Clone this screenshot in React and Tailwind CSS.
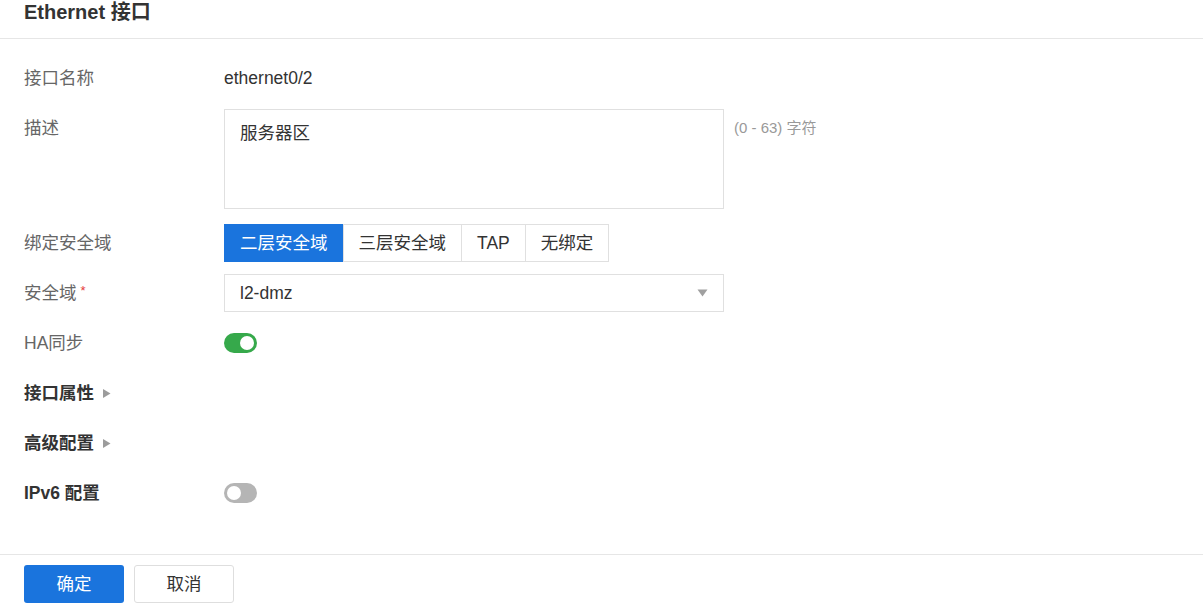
import React from "react";

const font = { fontFamily: '"Liberation Sans", Arial, "Noto Sans CJK SC", sans-serif' };

function Caret() {
  return (
    <svg width="9" height="11" viewBox="0 0 9 11" className="ml-[8px]">
      <path d="M1 1 L8.5 5.5 L1 10 Z" fill="#9c9c9c" />
    </svg>
  );
}

function Toggle({ on }) {
  return (
    <div
      className={
        "flex h-[20px] w-[33px] items-center rounded-full px-[3px] " +
        (on ? "justify-end bg-[#36a94b]" : "justify-start bg-[#b5b5b5]")
      }
    >
      <div className="h-[14px] w-[14px] rounded-full bg-white" />
    </div>
  );
}

function Row({ label, children, top, className = "" }) {
  return (
    <div className={"flex " + (top ? "items-start " : "items-center ") + className}>
      <div className="flex h-[38px] w-[200px] shrink-0 items-center">{label}</div>
      {children}
    </div>
  );
}

export default function App() {
  const seg = ["二层安全域", "三层安全域", "TAP", "无绑定"];
  return (
    <div className="flex h-[611px] w-[1203px] flex-col bg-white text-[17.5px] text-[#333]" style={font}>
      <div className="h-[39px] shrink-0 border-b border-[#e6e6e6] px-[24px]">
        <div className="text-[20px] font-bold leading-[24px] text-[#333]">Ethernet 接口</div>
      </div>

      <div className="flex flex-1 flex-col gap-[12px] px-[24px] pt-[20px]">
        <Row label={<span className="text-[#666]">接口名称</span>}>
          <span className="text-[#333]">ethernet0/2</span>
        </Row>

        <Row top label={<span className="text-[#666]">描述</span>} className="mb-[3px]">
          <div className="h-[100px] w-[500px] border border-[#e0e0e0] px-[15px] pt-[10px] leading-[26px] text-[#333]">
            服务器区
          </div>
          <div className="ml-[10px] flex h-[38px] items-center text-[15px] text-[#999]">(0 - 63) 字符</div>
        </Row>

        <Row label={<span className="text-[#666]">绑定安全域</span>}>
          <div className="flex h-[38px]">
            {seg.map((s, i) => (
              <div
                key={s}
                className={
                  "flex h-[38px] items-center px-[15px] " +
                  (i === 0
                    ? "border border-[#1a74dd] bg-[#1a74dd] text-white"
                    : "-ml-px border border-[#e0e0e0] bg-white text-[#333]")
                }
              >
                {s}
              </div>
            ))}
          </div>
        </Row>

        <Row
          label={
            <span className="text-[#666]">
              安全域<span className="relative -top-[4px] ml-[4px] text-[13px] text-[#e5393a]">*</span>
            </span>
          }
        >
          <div className="flex h-[38px] w-[500px] items-center justify-between border border-[#e0e0e0] pl-[15px] pr-[15px]">
            <span className="text-[#333]">l2-dmz</span>
            <svg width="11" height="8" viewBox="0 0 11 8">
              <path d="M0.5 0.5 L10.5 0.5 L5.5 7.5 Z" fill="#a0a0a0" />
            </svg>
          </div>
        </Row>

        <Row label={<span className="text-[#666]">HA同步</span>}>
          <Toggle on />
        </Row>

        <Row
          label={
            <span className="flex items-center font-bold text-[#333]">
              接口属性
              <Caret />
            </span>
          }
        >
          <span />
        </Row>

        <Row
          label={
            <span className="flex items-center font-bold text-[#333]">
              高级配置
              <Caret />
            </span>
          }
        >
          <span />
        </Row>

        <Row label={<span className="font-bold text-[#333]">IPv6 配置</span>}>
          <Toggle on={false} />
        </Row>
      </div>

      <div className="flex h-[57px] shrink-0 gap-[10px] border-t border-[#e6e6e6] px-[24px] pt-[10px]">
        <button className="h-[38px] w-[100px] rounded-[3px] bg-[#1a74dd] text-white">确定</button>
        <button className="h-[38px] w-[100px] rounded-[3px] border border-[#dedede] bg-white text-[#333]">取消</button>
      </div>
    </div>
  );
}
